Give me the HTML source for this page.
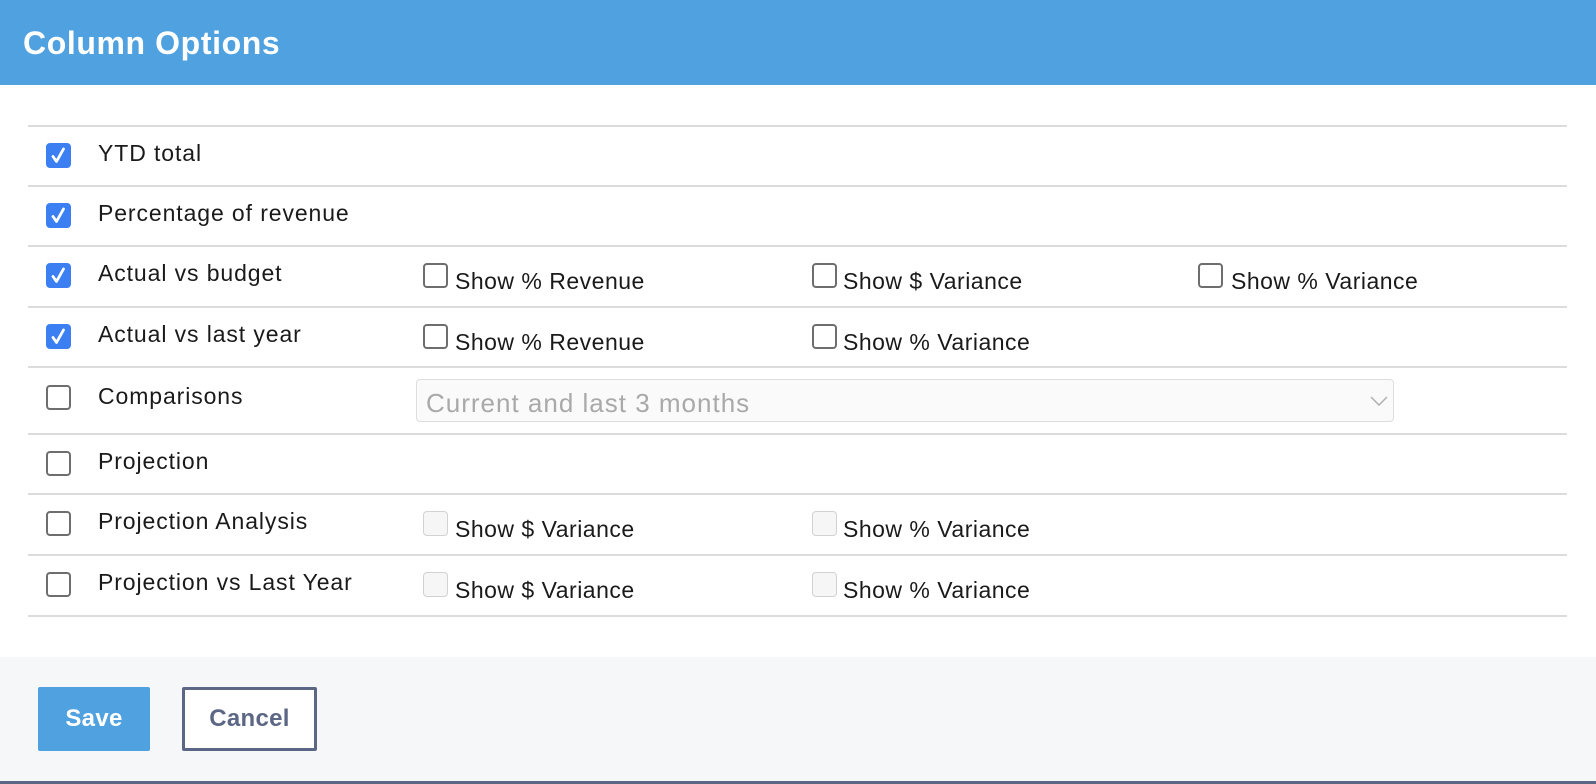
<!DOCTYPE html>
<html><head><meta charset="utf-8"><style>
*{margin:0;padding:0;box-sizing:border-box}
body{width:1596px;height:784px;position:relative;background:#fff;font-family:"Liberation Sans",sans-serif;overflow:hidden;color:#1a1a1a}
.hdr{position:absolute;left:0;top:0;width:1596px;height:85px;background:#4fa1e0}
.title{position:absolute;left:23px;top:27px;font-size:32px;line-height:32px;font-weight:bold;color:#fff;letter-spacing:0.6px}
.line{position:absolute;left:28px;width:1539px;height:2px;background:#dcdcdc}
.cb{position:absolute;width:25px;height:25px;border:2px solid #6e6e6e;border-radius:4px;background:#fff}
.cb.on{background:#3b7ff2;border-color:#3b7ff2}
.cb.dis{border-color:#d2d2d2;background:#f6f6f6;border-width:1.5px}
.cb svg{position:absolute;left:0;top:0}
.t{position:absolute;font-size:23px;line-height:23px;letter-spacing:0.5px;white-space:nowrap}
.m{letter-spacing:0.9px}
.sel{position:absolute;left:416px;top:379px;width:978px;height:43px;border:1.5px solid #dedede;border-radius:4px;background:#fafafa}
.sel span{position:absolute;left:9px;top:10px;font-size:26px;line-height:26px;color:#a9a9a9;letter-spacing:1px;white-space:nowrap}
.ftr{position:absolute;left:0;top:657px;width:1596px;height:124px;background:#f6f7f9}
.bot{position:absolute;left:0;top:781px;width:1596px;height:3px;background:#5b6785}
.btn{position:absolute;top:687px;height:64px;font-size:24px;font-weight:bold;text-align:center;line-height:64px;letter-spacing:0.3px}
</style></head><body>
<div class="hdr"><div class="title">Column Options</div></div>

<div class="line" style="top:125px"></div>
<div class="line" style="top:185px"></div>
<div class="line" style="top:245px"></div>
<div class="line" style="top:306px"></div>
<div class="line" style="top:366px"></div>
<div class="line" style="top:433px"></div>
<div class="line" style="top:493px"></div>
<div class="line" style="top:554px"></div>
<div class="line" style="top:615px"></div>

<div class="cb on" style="left:46px;top:143px"><svg width="21" height="21" viewBox="0 0 21 21"><path d="M5 11.5l3.5 5L15.5 4" fill="none" stroke="#fff" stroke-width="2.8" stroke-linecap="round" stroke-linejoin="round"/></svg></div>
<div class="t m" style="left:98px;top:142px">YTD total</div>

<div class="cb on" style="left:46px;top:203px"><svg width="21" height="21" viewBox="0 0 21 21"><path d="M5 11.5l3.5 5L15.5 4" fill="none" stroke="#fff" stroke-width="2.8" stroke-linecap="round" stroke-linejoin="round"/></svg></div>
<div class="t m" style="left:98px;top:202px">Percentage of revenue</div>

<div class="cb on" style="left:46px;top:263px"><svg width="21" height="21" viewBox="0 0 21 21"><path d="M5 11.5l3.5 5L15.5 4" fill="none" stroke="#fff" stroke-width="2.8" stroke-linecap="round" stroke-linejoin="round"/></svg></div>
<div class="t m" style="left:98px;top:262px">Actual vs budget</div>
<div class="cb" style="left:423px;top:263px"></div><div class="t" style="left:455px;top:270px">Show % Revenue</div>
<div class="cb" style="left:812px;top:263px"></div><div class="t" style="left:843px;top:270px">Show $ Variance</div>
<div class="cb" style="left:1198px;top:263px"></div><div class="t" style="left:1231px;top:270px">Show % Variance</div>

<div class="cb on" style="left:46px;top:324px"><svg width="21" height="21" viewBox="0 0 21 21"><path d="M5 11.5l3.5 5L15.5 4" fill="none" stroke="#fff" stroke-width="2.8" stroke-linecap="round" stroke-linejoin="round"/></svg></div>
<div class="t m" style="left:98px;top:323px">Actual vs last year</div>
<div class="cb" style="left:423px;top:324px"></div><div class="t" style="left:455px;top:331px">Show % Revenue</div>
<div class="cb" style="left:812px;top:324px"></div><div class="t" style="left:843px;top:331px">Show % Variance</div>

<div class="cb" style="left:46px;top:385px"></div>
<div class="t m" style="left:98px;top:385px">Comparisons</div>
<div class="sel"><span>Current and last 3 months</span>
<svg style="position:absolute;left:953px;top:16px" width="18" height="10" viewBox="0 0 18 10"><path d="M1 1l8 8 8-8" fill="none" stroke="#b0b0b0" stroke-width="1.5"/></svg></div>

<div class="cb" style="left:46px;top:451px"></div>
<div class="t m" style="left:98px;top:450px">Projection</div>

<div class="cb" style="left:46px;top:511px"></div>
<div class="t m" style="left:98px;top:510px">Projection Analysis</div>
<div class="cb dis" style="left:423px;top:511px"></div><div class="t" style="left:455px;top:518px">Show $ Variance</div>
<div class="cb dis" style="left:812px;top:511px"></div><div class="t" style="left:843px;top:518px">Show % Variance</div>

<div class="cb" style="left:46px;top:572px"></div>
<div class="t m" style="left:98px;top:571px">Projection vs Last Year</div>
<div class="cb dis" style="left:423px;top:572px"></div><div class="t" style="left:455px;top:579px">Show $ Variance</div>
<div class="cb dis" style="left:812px;top:572px"></div><div class="t" style="left:843px;top:579px">Show % Variance</div>

<div class="ftr"></div>
<div class="btn" style="left:38px;width:112px;background:#4fa1e0;color:#fff;border-radius:2px">Save</div>
<div class="btn" style="left:182px;width:135px;background:#fff;color:#5b6785;border:3px solid #5b6785;line-height:58px;border-radius:2px">Cancel</div>
<div class="bot"></div>
</body></html>
